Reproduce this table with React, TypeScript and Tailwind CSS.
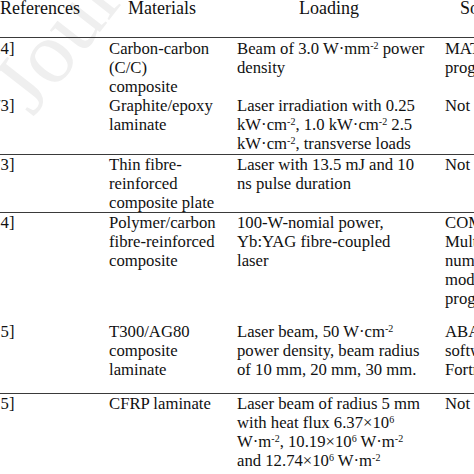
import type { ReactNode } from "react";

interface TableRow {
  ref: string;
  materials: string[];
  loading: ReactNode[];
  software: string[];
  className: string;
}

const Sup = ({ children }: { children: ReactNode }) => (
  <sup className="text-[10px]">{children}</sup>
);

const rows: TableRow[] = [
  {
    ref: "[24]",
    materials: ["Carbon-carbon", "(C/C)", "composite"],
    loading: [
      <>
        Beam of 3.0 W·mm<Sup>-2</Sup> power
      </>,
      "density",
    ],
    software: ["MATLAB", "program"],
    className: "pt-[0.5px]",
  },
  {
    ref: "[73]",
    materials: ["Graphite/epoxy", "laminate"],
    loading: [
      "Laser irradiation with 0.25",
      <>
        kW·cm<Sup>-2</Sup>, 1.0 kW·cm<Sup>-2</Sup> 2.5
      </>,
      <>
        kW·cm<Sup>-2</Sup>, transverse loads
      </>,
    ],
    software: ["Not reported"],
    className: "pb-[1px] border-b-[1.5px] border-[#3a3a3a]",
  },
  {
    ref: "[61-\u20093]",
    materials: ["Thin fibre-", "reinforced", "composite plate"],
    loading: ["Laser with 13.5 mJ and 10", "ns pulse duration"],
    software: ["Not reported"],
    className: "pt-[0.5px] border-b-[1.5px] border-[#3a3a3a]",
  },
  {
    ref: "[62-\u20094]",
    materials: ["Polymer/carbon", "fibre-reinforced", "composite"],
    loading: ["100-W-nomial power,", "Yb:YAG fibre-coupled", "laser"],
    software: ["COMSOL", "Multiphysics", "numerical", "modelling", "program"],
    className: "pb-[13.5px]",
  },
  {
    ref: "[63-\u20095]",
    materials: ["T300/AG80", "composite", "laminate"],
    loading: [
      <>
        Laser beam, 50 W·cm<Sup>-2</Sup>
      </>,
      "power density, beam radius",
      "of 10 mm, 20 mm, 30 mm.",
    ],
    software: ["ABAQUS", "software,", "Fortran"],
    className: "pb-[14px] border-b-[1.5px] border-[#3a3a3a]",
  },
  {
    ref: "[64-\u20095]",
    materials: ["CFRP laminate"],
    loading: [
      "Laser beam of radius 5 mm",
      <>
        with heat flux 6.37×10<Sup>6</Sup>
      </>,
      <>
        W·m<Sup>-2</Sup>, 10.19×10<Sup>6</Sup> W·m<Sup>-2</Sup>
      </>,
      <>
        and 12.74×10<Sup>6</Sup> W·m<Sup>-2</Sup>
      </>,
    ],
    software: ["Not reported"],
    className: "",
  },
];

function Lines({ items }: { items: ReactNode[] }) {
  return (
    <div className="flex flex-col">
      {items.map((item, i) => (
        <div key={i} className="whitespace-nowrap">
          {item}
        </div>
      ))}
    </div>
  );
}

export default function App() {
  return (
    <div
      className="relative h-[474px] w-[474px] overflow-hidden bg-white text-[#111]"
      style={{ fontFamily: '"Liberation Serif", "Times New Roman", serif' }}
    >
      {/* watermark */}
      <div className="pointer-events-none absolute left-[10px] top-[56px] origin-left -rotate-[52deg] whitespace-nowrap text-[88px] leading-none text-[#efefef]">
        Journal Pre-proof
      </div>

      <div className="relative w-[700px]">
        <div className="grid h-[38px] grid-cols-[109px_128px_208px_1fr] border-b-[1.5px] border-[#3a3a3a] text-[18px] leading-[16px]">
          <div className="flex justify-end overflow-hidden pr-[29px] whitespace-nowrap">
            References
          </div>
          <div className="pl-[19px]">Materials</div>
          <div className="pl-[62px]">Loading</div>
          <div className="pl-[15px]">Software</div>
        </div>

        {rows.map((row) => (
          <div
            key={row.ref}
            className={`grid grid-cols-[109px_128px_208px_1fr] text-[16.7px] leading-[19px] ${row.className}`}
          >
            <div className="flex justify-end overflow-hidden pr-[94.5px] whitespace-nowrap">
              {row.ref}
            </div>
            <Lines items={row.materials} />
            <Lines items={row.loading} />
            <Lines items={row.software} />
          </div>
        ))}
      </div>
    </div>
  );
}
